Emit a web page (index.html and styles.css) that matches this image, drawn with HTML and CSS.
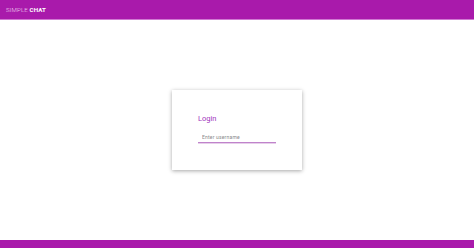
FILE: index.html
```html
<!DOCTYPE html>
<html lang="en">
<head>
    <meta charset="UTF-8">
    <meta name="viewport" content="width=device-width, initial-scale=1.0">
    <title>Simple Chat</title>
    <link rel="stylesheet" href="styles.css">
</head>
<body>

    <!-- Top bar -->
    <header class="topbar">
        <span class="brand">SIMPLE <b>CHAT</b></span>
    </header>

    <!-- Login card -->
    <main class="content">
        <div class="card">
            <h2>Login</h2>
            <div class="field-wrap">
                <input type="text" class="field" placeholder="Enter username">
            </div>
        </div>
    </main>

    <footer class="bottombar"></footer>

</body>
</html>
```

FILE: styles.css
```css
html, body {
    margin: 0;
    height: 100%;
}
body {
    font-family: Roboto, 'Liberation Sans', sans-serif;
    display: flex;
    flex-direction: column;
    background: #fff;
}

.topbar {
    height: 19px;
    background: #a91aab;
    border-bottom: 1px solid #d07ad2;
    display: flex;
    align-items: center;
    padding-left: 6px;
}
.brand {
    color: #f0d6f0;
    font-size: 6.2px;
    font-weight: 300;
    letter-spacing: 0.1px;
}
.brand b {
    color: #fff;
    font-weight: 700;
}

.content {
    flex: 1;
    display: flex;
    justify-content: center;
    align-items: center;
}
.card {
    width: 130px;
    height: 80px;
    box-sizing: border-box;
    padding: 24px 26px 0;
    background: #fff;
    box-shadow: 0px 1px 4px rgba(0, 0, 0, 0.35);
}
h2 {
    margin: 0 0 9px;
    color: #a136bd;
    font-size: 7.5px;
    font-weight: 400;
}
.field-wrap {
    width: 78px;
    height: 12px;
    background: linear-gradient(to top, #e6cfea 0, #e6cfea 1px, #c083cb 1px, #c083cb 2px, transparent 2px);
}
.field {
    display: block;
    width: 100%;
    box-sizing: border-box;
    padding: 2px 4px 0;
    border: none;
    font-family: Roboto, 'Liberation Sans', sans-serif;
    font-size: 5px;
    outline: none;
    background: transparent;
}
.field::placeholder {
    color: #8a8a8a;
    letter-spacing: 0.2px;
}

.bottombar {
    height: 8px;
    background: #a91aab;
}
```
